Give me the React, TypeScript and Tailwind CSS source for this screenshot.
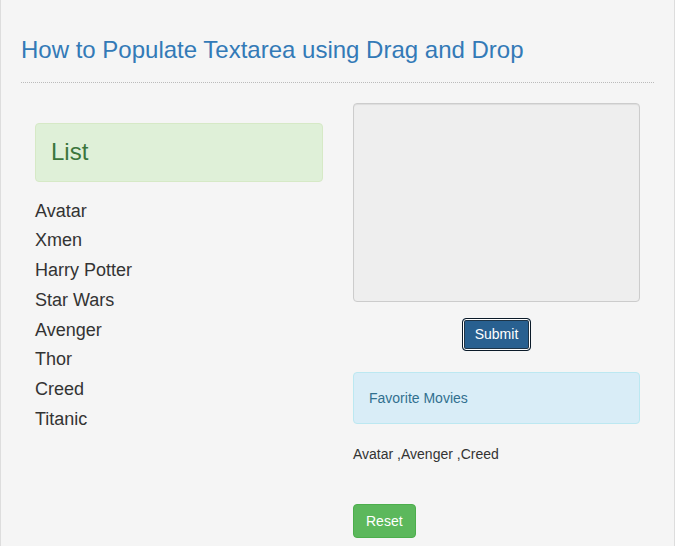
const movies = ['Avatar', 'Xmen', 'Harry Potter', 'Star Wars', 'Avenger', 'Thor', 'Creed', 'Titanic'];

const App = () => {
  return (
    <div className="min-h-screen bg-[#f5f5f5] border-x border-[#dddddd] px-[20px] pt-[37px] pb-[8px] font-['Liberation_Sans',Arial,sans-serif] text-[14px] text-[#333333]">
      {/* Header */}
      <div className="border-b border-dotted border-[#bbbbbb] pb-[19px]">
        <h3 className="text-[24px] leading-[1.1] text-[#337ab7]">How to Populate Textarea using Drag and Drop</h3>
      </div>

      <div className="grid grid-cols-[316px_1fr]">
        {/* List column */}
        <div className="px-[14px] pt-[40px]">
          <div className="rounded-[4px] border border-[#d6e9c6] bg-[#dff0d8] p-[15px] text-[24px] leading-[1.1] text-[#3c763d]">
            List
          </div>
          <ul className="mt-[15px]">
            {movies.map((m) => (
              <li key={m} className="text-[18px] leading-[29.7px] text-[#333333] cursor-move">
                {m}
              </li>
            ))}
          </ul>
        </div>

        {/* Drop column */}
        <div className="pl-[16px] pr-[14px] pt-[20px]">
          <textarea
            className="block h-[199px] w-full resize-none rounded-[4px] border border-[#cccccc] bg-[#eeeeee] shadow-[inset_0_1px_1px_rgba(0,0,0,0.075)]"
            readOnly
          />
          <div className="mt-[16px] flex justify-center">
            <button className="h-[33px] rounded-[4px] border border-[#0b1a28] bg-[#286090] px-[12px] text-[14px] text-white shadow-[inset_0_0_0_1px_#ffffff,inset_0_0_0_2px_#1d3447]">
              Submit
            </button>
          </div>
          <div className="mt-[21px] rounded-[4px] border border-[#bce8f1] bg-[#d9edf7] p-[15px] leading-[20px] text-[#31708f]">
            Favorite Movies
          </div>
          <p className="mt-[20px] leading-[20px]">Avatar ,Avenger ,Creed</p>
          <button className="mt-[40px] h-[34px] rounded-[4px] border border-[#4cae4c] bg-[#5cb85c] px-[12px] text-[14px] text-white">
            Reset
          </button>
        </div>
      </div>
    </div>
  );
};

export default App;
